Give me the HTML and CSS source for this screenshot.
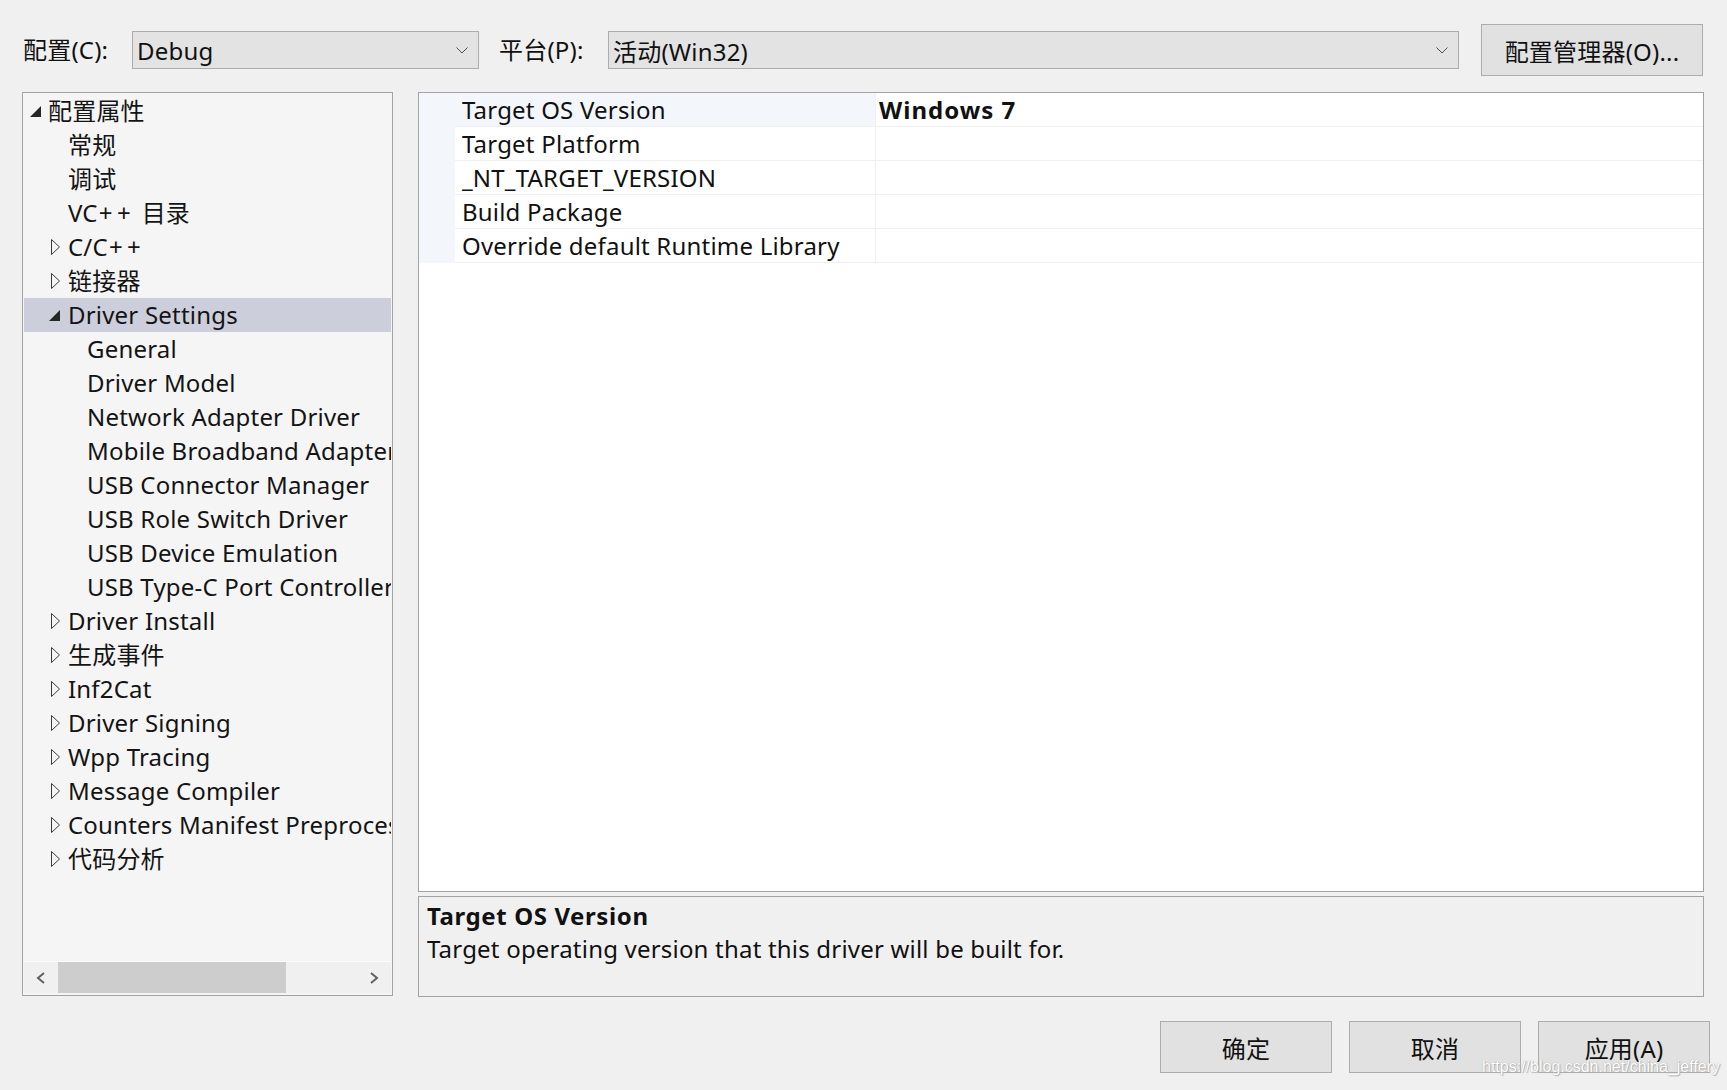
FILE: index.html
```html
<!DOCTYPE html>
<html lang="zh-CN">
<head>
<meta charset="utf-8">
<title>属性页</title>
<link rel="stylesheet" href="styles.css">
</head>
<body>
<div class="dialog">
  <div class="topbar">
    <span class="label lbl-config">配置(C):</span>
    <div class="combo combo-config">
      <span class="combo-text">Debug</span>
      <svg class="chev" width="12" height="7" viewBox="0 0 12 7"><path d="M0.5 0.5L6 6L11.5 0.5" fill="none" stroke="#505050"/></svg>
    </div>
    <span class="label lbl-platform">平台(P):</span>
    <div class="combo combo-platform">
      <span class="combo-text">活动(Win32)</span>
      <svg class="chev" width="12" height="7" viewBox="0 0 12 7"><path d="M0.5 0.5L6 6L11.5 0.5" fill="none" stroke="#505050"/></svg>
    </div>
    <button class="btn btn-manager">配置管理器(O)...</button>
  </div>

  <div class="main">
    <div class="tree">
      <div class="tree-rows">
        <div class="trow lvl0"><span class="exp"><svg class="ico-exp" width="11" height="11" viewBox="0 0 11 11"><path d="M11 0V11H0Z" fill="#262626"/></svg></span><span class="ttext">配置属性</span></div>
        <div class="trow lvl1"><span class="exp"></span><span class="ttext">常规</span></div>
        <div class="trow lvl1"><span class="exp"></span><span class="ttext">调试</span></div>
        <div class="trow lvl1"><span class="exp"></span><span class="ttext">VC<span class="pp">++</span> 目录</span></div>
        <div class="trow lvl1"><span class="exp"><svg class="ico-col" width="9" height="16" viewBox="0 0 9 16"><path d="M0.5 0.5L8.5 8L0.5 15.5Z" fill="none" stroke="#3a3a3a"/></svg></span><span class="ttext">C/C<span class="pp">++</span></span></div>
        <div class="trow lvl1"><span class="exp"><svg class="ico-col" width="9" height="16" viewBox="0 0 9 16"><path d="M0.5 0.5L8.5 8L0.5 15.5Z" fill="none" stroke="#3a3a3a"/></svg></span><span class="ttext">链接器</span></div>
        <div class="trow lvl1 selected"><span class="exp"><svg class="ico-exp1" width="11" height="11" viewBox="0 0 11 11"><path d="M11 0V11H0Z" fill="#262626"/></svg></span><span class="ttext">Driver Settings</span></div>
        <div class="trow lvl2"><span class="exp"></span><span class="ttext">General</span></div>
        <div class="trow lvl2"><span class="exp"></span><span class="ttext">Driver Model</span></div>
        <div class="trow lvl2"><span class="exp"></span><span class="ttext">Network Adapter Driver</span></div>
        <div class="trow lvl2"><span class="exp"></span><span class="ttext">Mobile Broadband Adapter</span></div>
        <div class="trow lvl2"><span class="exp"></span><span class="ttext">USB Connector Manager</span></div>
        <div class="trow lvl2"><span class="exp"></span><span class="ttext">USB Role Switch Driver</span></div>
        <div class="trow lvl2"><span class="exp"></span><span class="ttext">USB Device Emulation</span></div>
        <div class="trow lvl2"><span class="exp"></span><span class="ttext">USB Type-C Port Controller</span></div>
        <div class="trow lvl1"><span class="exp"><svg class="ico-col" width="9" height="16" viewBox="0 0 9 16"><path d="M0.5 0.5L8.5 8L0.5 15.5Z" fill="none" stroke="#3a3a3a"/></svg></span><span class="ttext">Driver Install</span></div>
        <div class="trow lvl1"><span class="exp"><svg class="ico-col" width="9" height="16" viewBox="0 0 9 16"><path d="M0.5 0.5L8.5 8L0.5 15.5Z" fill="none" stroke="#3a3a3a"/></svg></span><span class="ttext">生成事件</span></div>
        <div class="trow lvl1"><span class="exp"><svg class="ico-col" width="9" height="16" viewBox="0 0 9 16"><path d="M0.5 0.5L8.5 8L0.5 15.5Z" fill="none" stroke="#3a3a3a"/></svg></span><span class="ttext">Inf2Cat</span></div>
        <div class="trow lvl1"><span class="exp"><svg class="ico-col" width="9" height="16" viewBox="0 0 9 16"><path d="M0.5 0.5L8.5 8L0.5 15.5Z" fill="none" stroke="#3a3a3a"/></svg></span><span class="ttext">Driver Signing</span></div>
        <div class="trow lvl1"><span class="exp"><svg class="ico-col" width="9" height="16" viewBox="0 0 9 16"><path d="M0.5 0.5L8.5 8L0.5 15.5Z" fill="none" stroke="#3a3a3a"/></svg></span><span class="ttext">Wpp Tracing</span></div>
        <div class="trow lvl1"><span class="exp"><svg class="ico-col" width="9" height="16" viewBox="0 0 9 16"><path d="M0.5 0.5L8.5 8L0.5 15.5Z" fill="none" stroke="#3a3a3a"/></svg></span><span class="ttext">Message Compiler</span></div>
        <div class="trow lvl1"><span class="exp"><svg class="ico-col" width="9" height="16" viewBox="0 0 9 16"><path d="M0.5 0.5L8.5 8L0.5 15.5Z" fill="none" stroke="#3a3a3a"/></svg></span><span class="ttext">Counters Manifest Preprocessor</span></div>
        <div class="trow lvl1"><span class="exp"><svg class="ico-col" width="9" height="16" viewBox="0 0 9 16"><path d="M0.5 0.5L8.5 8L0.5 15.5Z" fill="none" stroke="#3a3a3a"/></svg></span><span class="ttext">代码分析</span></div>
      </div>
      <div class="hscroll">
        <div class="sbtn"><svg width="10" height="12" viewBox="0 0 10 12"><path d="M8 1L2 6L8 11" fill="none" stroke="#606060" stroke-width="2"/></svg></div>
        <div class="strack"><div class="sthumb"></div></div>
        <div class="sbtn"><svg width="10" height="12" viewBox="0 0 10 12"><path d="M2 1L8 6L2 11" fill="none" stroke="#606060" stroke-width="2"/></svg></div>
      </div>
    </div>

    <div class="right">
      <div class="grid">
        <div class="prow current"><div class="gut"></div><div class="pname">Target OS Version</div><div class="pval strong">Windows 7</div></div>
        <div class="prow"><div class="gut"></div><div class="pname">Target Platform</div><div class="pval"></div></div>
        <div class="prow"><div class="gut"></div><div class="pname">_NT_TARGET_VERSION</div><div class="pval"></div></div>
        <div class="prow"><div class="gut"></div><div class="pname">Build Package</div><div class="pval"></div></div>
        <div class="prow"><div class="gut"></div><div class="pname">Override default Runtime Library</div><div class="pval"></div></div>
      </div>
      <div class="desc">
        <div class="desc-title">Target OS Version</div>
        <div class="desc-text">Target operating version that this driver will be built for.</div>
      </div>
    </div>
  </div>

  <div class="footer">
    <button class="btn fbtn">确定</button>
    <button class="btn fbtn">取消</button>
    <button class="btn fbtn">应用(A)</button>
  </div>
  <div class="watermark">https://blog.csdn.net/china_jeffery</div>
</div>
</body>
</html>
```

FILE: styles.css
```css
html, body {
  margin: 0;
  padding: 0;
}
body {
  background: #f0f0f0;
  font-family: "Noto Sans", "Noto Sans CJK SC", sans-serif;
  font-size: 24px;
  color: #111;
  letter-spacing: 0.2px;
}
.dialog {
  width: 1727px;
  height: 1090px;
  box-sizing: border-box;
  padding: 24px 23px 0 22px;
  position: relative;
  overflow: hidden;
}

/* top bar */
.topbar {
  display: flex;
  align-items: center;
  height: 52px;
}
.label {
  white-space: nowrap;
  line-height: 38px;
}
.lbl-config {
  margin-left: 1px;
  width: 109px;
}
.lbl-platform {
  margin-left: 20px;
  width: 109px;
}
.combo {
  height: 38px;
  box-sizing: border-box;
  border: 1px solid #adadad;
  background: #e3e3e3;
  display: flex;
  align-items: center;
  justify-content: space-between;
  padding: 0 10px 0 4px;
}
.combo-config { width: 347px; }
.combo-platform { width: 851px; }
.combo-text { white-space: nowrap; }
.chev { display: block; }

.btn {
  font-family: "Noto Sans", "Noto Sans CJK SC", sans-serif;
  font-size: 24px;
  letter-spacing: 0.2px;
  color: #111;
  background: #e1e1e1;
  border: 1px solid #adadad;
  box-sizing: border-box;
  padding: 0;
  margin: 0;
}
.btn-manager {
  margin-left: 22px;
  width: 222px;
  height: 52px;
}

/* main */
.main {
  display: flex;
  margin-top: 16px;
  height: 905px;
}
.tree {
  width: 371px;
  height: 904px;
  box-sizing: border-box;
  border: 1px solid #a3a3a3;
  background: #f5f5f5;
  padding: 1px;
  display: flex;
  flex-direction: column;
}
.tree-rows {
  flex: 1;
  overflow: hidden;
}
.trow {
  height: 34px;
  line-height: 34px;
  display: flex;
  align-items: center;
  white-space: nowrap;
}
.trow.selected { background: #cccedb; }
.lvl0 { padding-left: 0; }
.lvl1 { padding-left: 20px; }
.lvl2 { padding-left: 39px; }
.exp {
  width: 24px;
  flex: none;
  display: flex;
  align-items: center;
}
.ico-exp { margin-left: 6px; }
.ico-exp1 { margin-left: 5px; }
.ico-col { margin-left: 7px; }
.ttext { color: #141414; }
.pp {
  letter-spacing: 4.5px;
  margin-left: 1px;
}

.hscroll {
  height: 31px;
  display: flex;
  background: #f0f0f0;
  border-top: 1px solid #fbfbfb;
  margin-bottom: 1px;
}
.sbtn {
  width: 34px;
  display: flex;
  align-items: center;
  justify-content: center;
}
.strack {
  flex: 1;
  display: flex;
}
.sthumb {
  width: 228px;
  background: #cdcdcd;
}

.right {
  flex: 1;
  margin-left: 25px;
  display: flex;
  flex-direction: column;
}
.grid {
  flex: 1;
  border: 1px solid #a3a3a3;
  background: #fff;
}
.prow {
  display: grid;
  grid-template-columns: 36px 421px 1fr;
  height: 34px;
  line-height: 33px;
}
.gut { background: #f3f6fb; }
.pname {
  border-bottom: 1px solid #f0f0f0;
  border-right: 1px solid #f0f0f0;
  padding-left: 7px;
  white-space: nowrap;
}
.prow.current .pname { background: #f3f6fb; }
.pval {
  border-bottom: 1px solid #f0f0f0;
  padding-left: 3px;
  white-space: nowrap;
}
.strong {
  font-weight: 700;
  letter-spacing: 1px;
}

.desc {
  height: 101px;
  margin-top: 4px;
  box-sizing: border-box;
  border: 1px solid #a3a3a3;
  background: #f0f0f0;
  padding: 2px 8px 0 8px;
}
.desc-title {
  font-weight: 700;
  line-height: 33px;
  letter-spacing: 0.6px;
}
.desc-text {
  line-height: 33px;
}

.footer {
  display: flex;
  justify-content: flex-end;
  gap: 17px;
  margin-top: 24px;
  margin-right: -6px;
}
.fbtn {
  width: 172px;
  height: 52px;
}
.watermark {
  position: absolute;
  left: 1482px;
  top: 1058px;
  font-family: "Liberation Sans", sans-serif;
  font-size: 16px;
  letter-spacing: 0;
  color: #ffffff;
  text-shadow: 0 0 1px #9a9a9a, 1px 1px 1px #b4b4b4;
  white-space: nowrap;
}
```
